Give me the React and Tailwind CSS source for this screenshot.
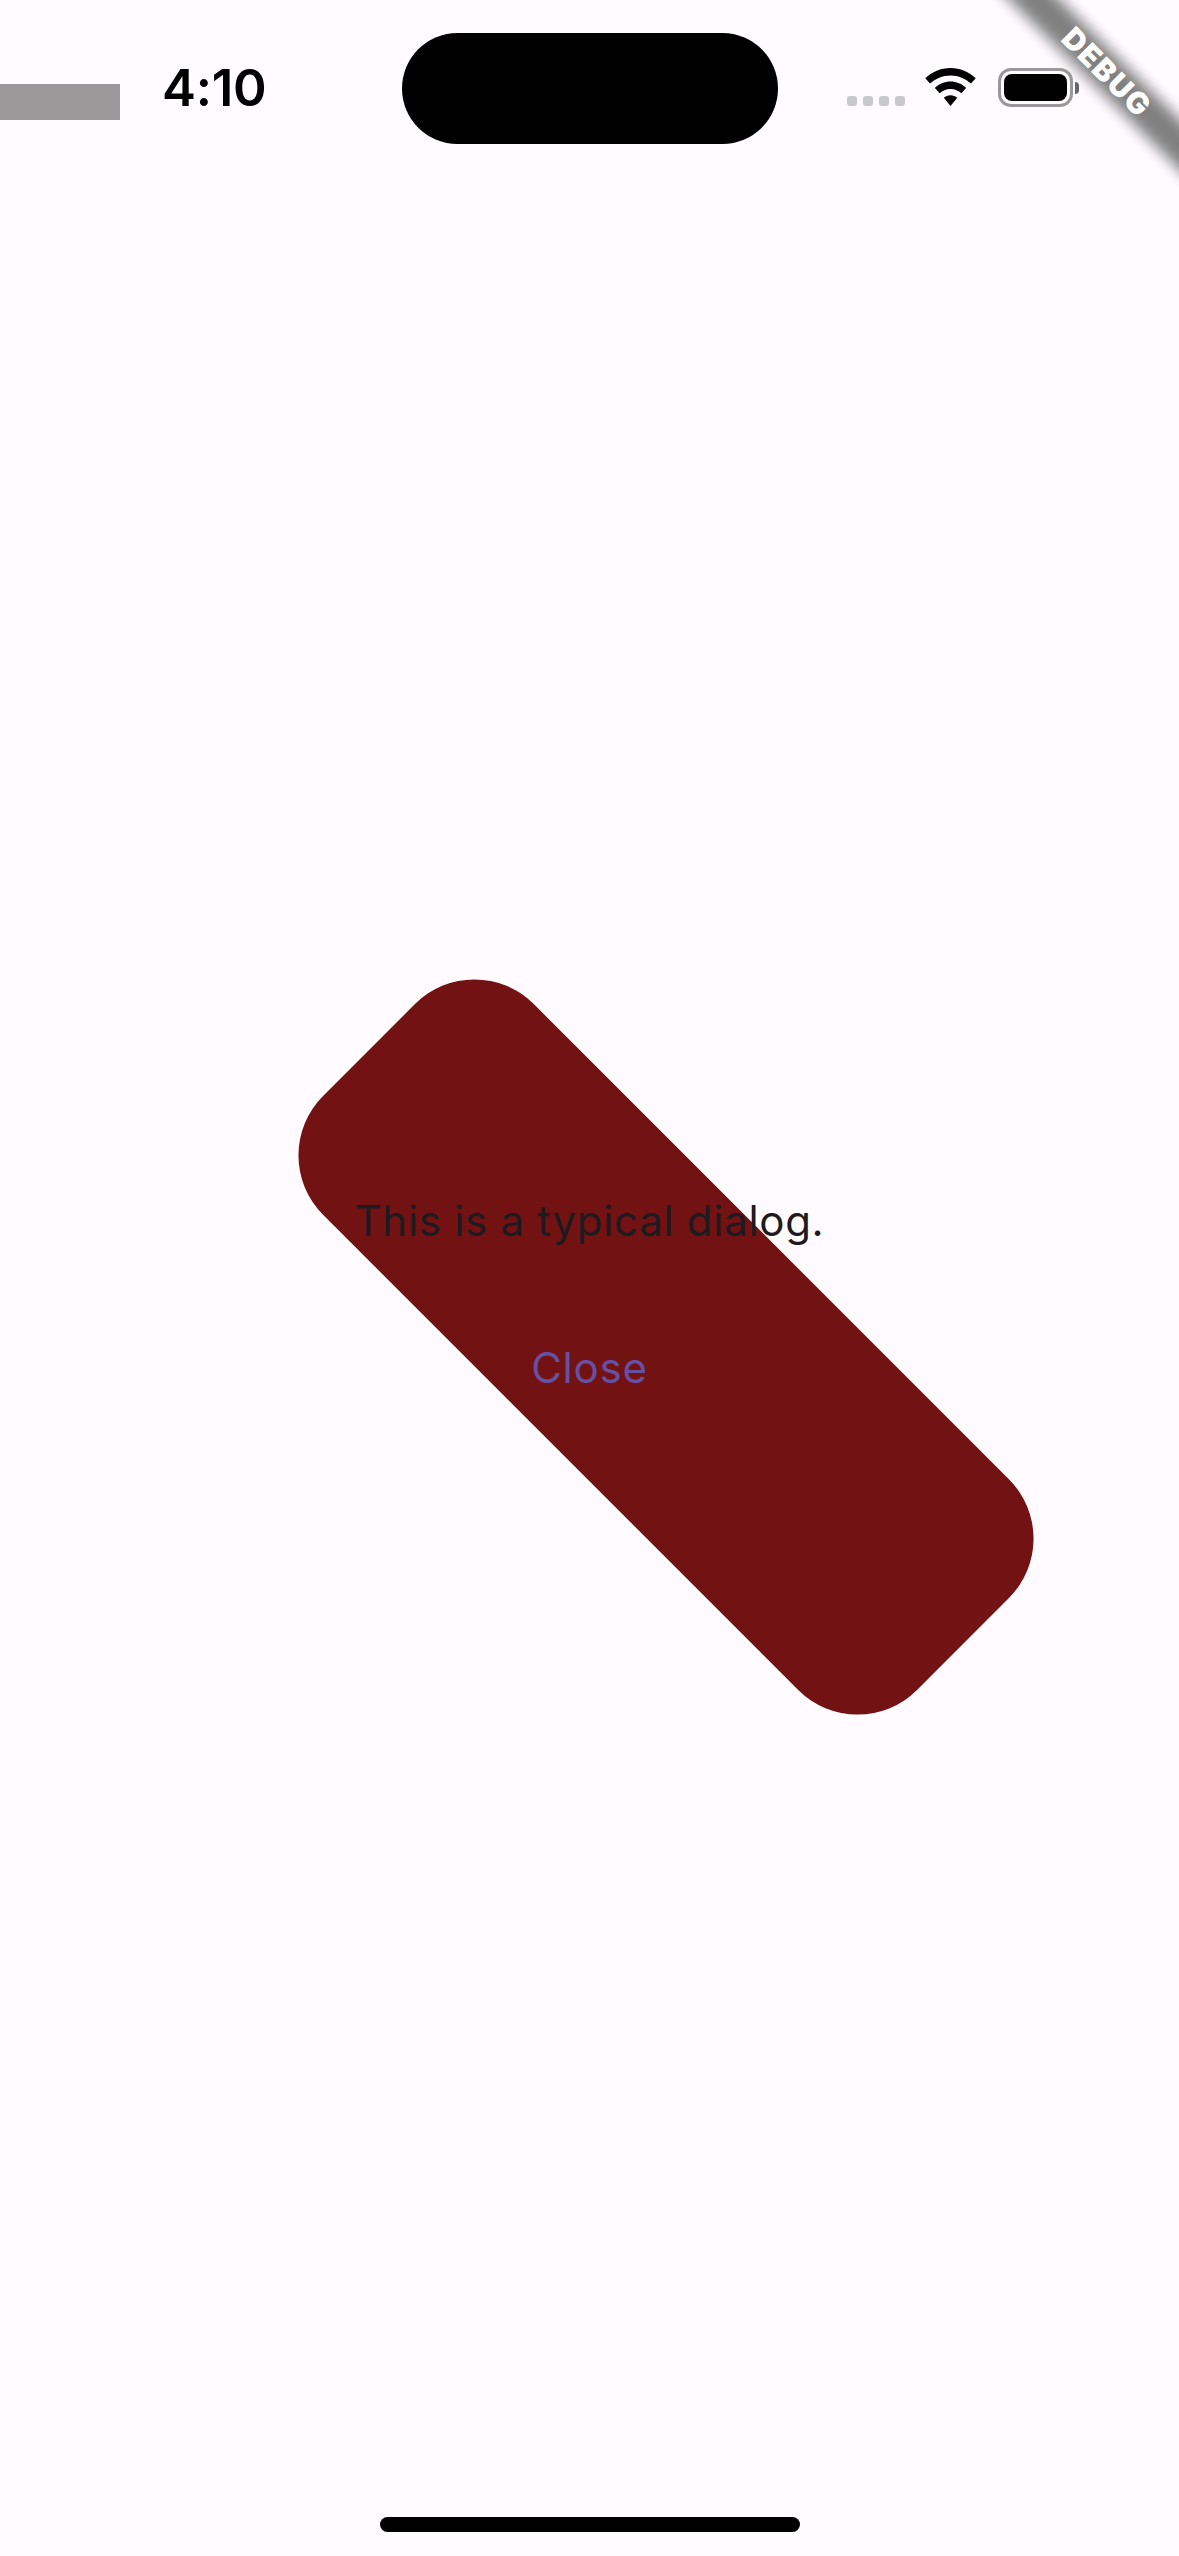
const FONT = { fontFamily: 'Inter, "Liberation Sans", sans-serif' };

const WifiIcon = () => (
  <svg width="51" height="39" viewBox="0 0 51 39" fill="black">
    <path d="M25.5 0C15.7 0 7 3.8 0.3 10.2L5 15.6C10.3 10.6 17.5 7.4 25.5 7.4C33.5 7.4 40.7 10.6 46 15.6L50.7 10.2C44 3.8 35.3 0 25.5 0Z" />
    <path d="M25.5 13.6C19.5 13.6 14 16 9.9 20L14.6 25.3C17.4 22.6 21.2 20.9 25.5 20.9C29.8 20.9 33.6 22.6 36.4 25.3L41.1 20C37 16 31.5 13.6 25.5 13.6Z" />
    <path d="M25.5 27.2C23 27.2 20.6 28.2 18.8 29.8L25.5 38L32.2 29.8C30.4 28.2 28 27.2 25.5 27.2Z" />
  </svg>
);

const StatusBar = () => (
  <div className="relative flex h-[165px] items-start" style={FONT}>
    <div className="mt-[84px] h-9 w-[120px] bg-[#9a9899]" />
    <span className="ml-[42px] mt-[58px] text-[51px] leading-[60px] font-semibold tracking-[-0.3px] text-black">4:10</span>
    <div className="ml-[136px] mt-[33px] h-[111px] w-[376px] rounded-[56px] bg-black" />
    <div className="ml-[69px] mt-24 flex gap-1.5">
      <div className="size-2.5 rounded-[3px] bg-[#c9c9c9]" />
      <div className="size-2.5 rounded-[3px] bg-[#c9c9c9]" />
      <div className="size-2.5 rounded-[3px] bg-[#c9c9c9]" />
      <div className="size-2.5 rounded-[3px] bg-[#c9c9c9]" />
    </div>
    <div className="ml-5 mt-[68px]">
      <WifiIcon />
    </div>
    <div className="ml-[22px] mt-[68px] flex items-center">
      <div className="h-[39px] w-[75px] rounded-[13px] border-[3px] border-[#999999] p-[3px]">
        <div className="h-full w-full rounded-[8px] bg-black" />
      </div>
      <div className="ml-[2px] h-3 w-1 rounded-r-full bg-[#666666]" />
    </div>
  </div>
);

const DebugBanner = () => (
  <div className="absolute right-[-128px] top-[54px] flex h-9 w-[400px] rotate-45 items-center justify-center">
    <div className="absolute inset-0 bg-[#808080] blur-[7px]" />
    <span className="relative text-[30px] leading-9 font-black tracking-[1.5px] text-white" style={FONT}>DEBUG</span>
  </div>
);

export default function App() {
  return (
    <div className="relative flex h-[2556px] w-[1179px] flex-col overflow-hidden bg-[#fffbff]">
      <StatusBar />
      <DebugBanner />

      {/* the dialog surface is drawn rotated, its content stays upright */}
      <div className="absolute left-[246px] top-[1198px] h-[298px] w-[840px] rotate-45 rounded-[84px] bg-[#721212]" />

      <div className="relative mt-[1026px] flex flex-col items-center" style={FONT}>
        <p className="text-[42px] leading-[60px] tracking-[0.7px] text-[#1d1b20]">This is a typical dialog.</p>
        <button className="mt-[87px] text-[42px] leading-[60px] tracking-[0.8px] text-[#6750a4]">Close</button>
      </div>

      <div className="mt-auto mb-6 h-[15px] w-[420px] self-center rounded-full bg-black" />
    </div>
  );
}
